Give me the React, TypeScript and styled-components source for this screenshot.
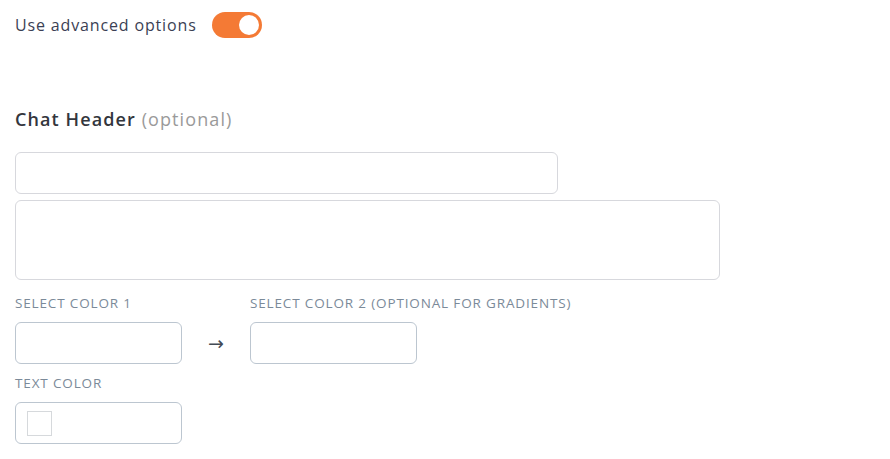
import styled, { createGlobalStyle } from 'styled-components'

const GlobalStyle = createGlobalStyle`
  body {
    margin: 0;
    background: #ffffff;
    font-family: 'Open Sans', 'Noto Sans', sans-serif;
    color: #3a3f4b;
  }
`

const Page = styled.div`
  padding: 12px 15px;
  width: 860px;
`

const ToggleRow = styled.label`
  display: flex;
  align-items: center;
  gap: 15px;
  font-size: 16px;
  letter-spacing: 0.85px;
  color: #3b3f54;
  height: 26px;
`

const Switch = styled.span<{ $on: boolean }>`
  position: relative;
  display: inline-block;
  width: 50px;
  height: 26px;
  border-radius: 13px;
  background: ${(p) => (p.$on ? '#f47a35' : '#c9ced6')};

  &::after {
    content: '';
    position: absolute;
    top: 3px;
    left: ${(p) => (p.$on ? '27px' : '3px')};
    width: 20px;
    height: 20px;
    border-radius: 50%;
    background: #ffffff;
  }
`

const SectionTitle = styled.h3`
  margin: 69px 0 0;
  font-size: 18px;
  font-weight: 600;
  letter-spacing: 1.1px;
  color: #33363d;
  line-height: 24px;
`

const Optional = styled.span`
  font-weight: 400;
  color: #9a9a9a;
`

const Fields = styled.div`
  margin-top: 21px;
  display: flex;
  flex-direction: column;
  gap: 6px;
`

const TextInput = styled.input`
  box-sizing: border-box;
  width: 543px;
  height: 42px;
  border: 1px solid #d7d8dd;
  border-radius: 6px;
  padding: 0 12px;
  font: inherit;
  outline: none;
`

const TextArea = styled.textarea`
  box-sizing: border-box;
  width: 705px;
  height: 80px;
  border: 1px solid #d7d8dd;
  border-radius: 6px;
  padding: 10px 12px;
  font: inherit;
  resize: none;
  outline: none;
`

const ColorRow = styled.div`
  margin-top: 14px;
  display: flex;
  align-items: flex-end;
`

const ColorField = styled.div`
  display: flex;
  flex-direction: column;
`

const Label = styled.div`
  font-size: 13.5px;
  letter-spacing: 0.85px;
  color: #7b8a99;
  text-transform: uppercase;
  line-height: 18px;
  margin-bottom: 10px;
  white-space: nowrap;
`

const ColorBox = styled.div`
  box-sizing: border-box;
  width: 167px;
  height: 42px;
  border: 1px solid #bcc6d0;
  border-radius: 6px;
  display: flex;
  align-items: center;
  padding: 0 11px;
`

const Swatch = styled.span<{ $color: string }>`
  box-sizing: border-box;
  width: 25px;
  height: 25px;
  border: 1px solid #d6d9dc;
  background: ${(p) => p.$color};
`

const Arrow = styled.div`
  width: 68px;
  height: 42px;
  display: flex;
  align-items: center;
  justify-content: center;
  font-size: 19px;
  color: #444b55;
  font-family: 'DejaVu Sans', sans-serif;
`

const TextColorField = styled(ColorField)`
  margin-top: 10px;
`

export default function App() {
  return (
    <>
      <GlobalStyle />
      <Page>
        <ToggleRow>
          Use advanced options
          <Switch $on={true} />
        </ToggleRow>

        <SectionTitle>
          Chat Header <Optional>(optional)</Optional>
        </SectionTitle>

        <Fields>
          <TextInput />
          <TextArea />
        </Fields>

        <ColorRow>
          <ColorField>
            <Label>Select color 1</Label>
            <ColorBox />
          </ColorField>
          <Arrow>→</Arrow>
          <ColorField>
            <Label>Select color 2 (optional for gradients)</Label>
            <ColorBox />
          </ColorField>
        </ColorRow>

        <TextColorField>
          <Label>Text color</Label>
          <ColorBox>
            <Swatch $color="#ffffff" />
          </ColorBox>
        </TextColorField>
      </Page>
    </>
  )
}
